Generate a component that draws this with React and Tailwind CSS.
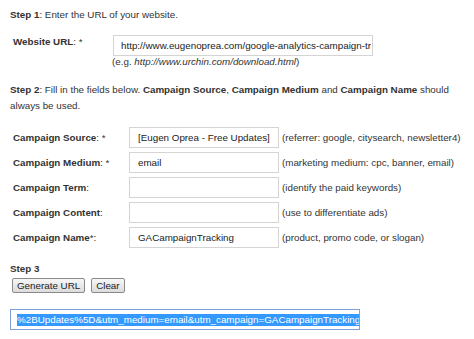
const FIELDS = [
  { label: 'Campaign Source', mark: ': *', value: '[Eugen Oprea - Free Updates]', hint: '(referrer: google, citysearch, newsletter4)' },
  { label: 'Campaign Medium', mark: ': *', value: 'email', hint: '(marketing medium: cpc, banner, email)' },
  { label: 'Campaign Term', mark: ':', value: '', hint: '(identify the paid keywords)' },
  { label: 'Campaign Content', mark: ':', value: '', hint: '(use to differentiate ads)' },
  { label: 'Campaign Name', mark: '*:', value: 'GACampaignTracking', hint: '(product, promo code, or slogan)' },
];

function Button({ children }) {
  return (
    <button className="h-[15px] px-[4px] border border-[#8a8a8a] rounded-[2px] bg-gradient-to-b from-[#f7f7f7] to-[#dcdcdc] text-[#222] leading-[13px]">
      {children}
    </button>
  );
}

export default function App() {
  return (
    <div className="w-[474px] h-[339px] bg-white text-[#333] text-[9.8px] leading-[16px] px-[10px] pt-[7px] font-['Liberation_Sans',Arial,sans-serif]">
      <p>
        <b>Step 1</b>: Enter the URL of your website.
      </p>

      <div className="flex items-start mt-[11px] pl-[3px]">
        <div className="w-[100px]">
          <b>Website URL</b>: *
        </div>
        <div className="mt-[1px]">
          <input
            readOnly
            value="http://www.eugenoprea.com/google-analytics-campaign-tracking/"
            className="block w-[260px] h-[21px] pl-[7px] pr-[1px] border border-[#d4d4d4] bg-white text-[#222] outline-none"
          />
          <div className="leading-[12px] -ml-[1px]">
            (e.g. <i>http://www.urchin.com/download.html</i>)
          </div>
        </div>
      </div>

      <p className="mt-[14px]">
        <b>Step 2</b>: Fill in the fields below. <b>Campaign Source</b>, <b>Campaign Medium</b> and{' '}
        <b>Campaign Name</b> should
        <br />
        always be used.
      </p>

      <div className="flex flex-col gap-[4px] mt-[13px] pl-[3px]">
        {FIELDS.map((f) => (
          <div key={f.label} className="flex items-center h-[21px]">
            <div className="w-[116px]">
              <b>{f.label}</b>
              {f.mark}
            </div>
            <input
              readOnly
              value={f.value}
              className="w-[150px] h-[21px] px-[8px] border border-[#d4d4d4] bg-white text-[#222] outline-none"
            />
            <div className="ml-[3px]">{f.hint}</div>
          </div>
        ))}
      </div>

      <p className="mt-[13px]">
        <b>Step 3</b>
      </p>
      <div className="flex gap-[6px] mt-[1px] pl-[2px]">
        <Button>Generate URL</Button>
        <Button>Clear</Button>
      </div>

      <div className="mt-[16px] w-[350px] h-[21px] border border-[#7f9fd9] flex items-center overflow-hidden pl-[6px]">
        <span className="bg-[#3399ff] text-white leading-[12px] whitespace-nowrap">
          %2BUpdates%5D&amp;utm_medium=email&amp;utm_campaign=GACampaignTracking
        </span>
      </div>
    </div>
  );
}
